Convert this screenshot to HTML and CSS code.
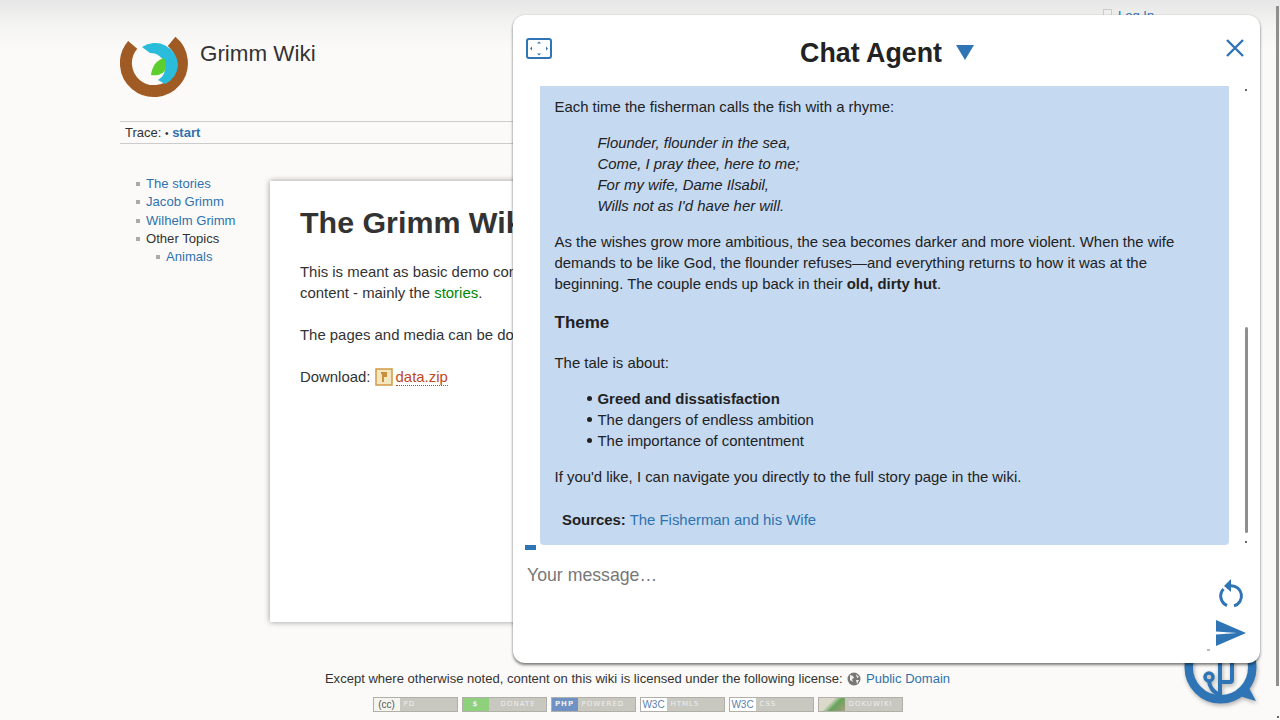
FILE: index.html
```html
<!DOCTYPE html>
<html lang="en">
<head>
<meta charset="utf-8">
<title>Grimm Wiki</title>
<link rel="stylesheet" href="styles.css">
</head>
<body>
<div class="wiki">
  <header class="site-head">
    <svg class="logo" viewBox="0 0 68 62" width="68" height="62" aria-hidden="true">
      <path d="M12.700 8.800A28 28 0 1 0 51.600 5.400" fill="none" stroke="#a05a24" stroke-width="12"/>
      <path d="M22 11A23 23 0 0 1 58 29A23 23 0 0 1 45 48L38 44A14 14 0 0 0 45 29A15 15 0 0 0 30 17Z" fill="#2bbcdc"/>
      <path d="M44 22C36 24 32 31 31 39C38 40 43 38 45 34C47 30 46 26 44 22Z" fill="#5ccf2f"/>
    </svg>
    <div class="site-title">Grimm Wiki</div>
    <div class="login"><span class="login-box"></span><a>Log In</a></div>
  </header>
  <div class="trace">Trace: <span class="dot">•</span> <a>start</a></div>
  <div class="main">
    <nav class="side">
      <ul>
        <li><a>The stories</a></li>
        <li><a>Jacob Grimm</a></li>
        <li><a>Wilhelm Grimm</a></li>
        <li>Other Topics
          <ul><li><a>Animals</a></li></ul>
        </li>
      </ul>
    </nav>
    <article class="card">
      <h1>The Grimm Wiki</h1>
      <p>This is meant as basic demo content<br>content - mainly the <a class="green">stories</a>.</p>
      <p>The pages and media can be down</p>
      <p>Download: <svg class="zip" viewBox="0 0 18 18" width="18" height="18" aria-hidden="true"><rect x="1" y="1" width="16" height="16" fill="#f4e6bf" stroke="#d09a45" stroke-width="1.500"/><path d="M6 4h6v5h-3v5H7V6H6z" fill="#c98f3a"/></svg><a class="file">data.zip</a></p>
    </article>
  </div>
  <footer class="foot">
    <div class="license">Except where otherwise noted, content on this wiki is licensed under the following license: <svg class="globe" viewBox="0 0 14 14" width="14" height="14" aria-hidden="true"><circle cx="7" cy="7" r="6.500" fill="#777"/><path d="M3 3l3 1 1 2-2 1 1 3-3-2zM9 2l3 3-2 1zM9 8l3 0-2 4z" fill="#f0f0f0"/></svg> <a>Public Domain</a></div>
    <div class="badges">
      <span class="badge"><b class="cc">(cc)</b><i>PD</i></span>
      <span class="badge"><b class="don">$</b><i class="wide">DONATE</i></span>
      <span class="badge"><b class="php">PHP</b><i>POWERED</i></span>
      <span class="badge"><b class="w3c">W3C</b><i>HTML5</i></span>
      <span class="badge"><b class="w3c">W3C</b><i>CSS</i></span>
      <span class="badge"><b class="doku"></b><i>DOKUWIKI</i></span>
    </div>
  </footer>
</div>

<div class="page-scroll"><span class="page-thumb"></span><span class="page-arrow"></span></div>

<svg class="brand" viewBox="0 0 76 50" width="76" height="50" aria-hidden="true">
  <circle cx="36.500" cy="7.500" r="31.750" fill="none" stroke="#2f75b5" stroke-width="8.500"/>
  <path d="M64 26L72 41L52 35Z" fill="#2f75b5"/>
  <path d="M36 0V35M36 22H46Q48 22 48 20V0M25 21Q26 31 36 35" fill="none" stroke="#2f75b5" stroke-width="4"/>
  <circle cx="25" cy="17" r="4" fill="none" stroke="#2f75b5" stroke-width="3.500"/>
</svg>

<section class="chat">
  <header class="chat-head">
    <button class="fit" aria-label="Expand">
      <svg viewBox="0 0 26 21" width="26" height="21"><rect x="1" y="1" width="24" height="19" rx="2" fill="none" stroke="#2f75b5" stroke-width="2"/><path d="M13 3.500l2 2h-4zM13 17.500l2-2h-4zM4 10.500l2-2v4zM22 10.500l-2-2v4z" fill="#2f75b5"/></svg>
    </button>
    <h2>Chat Agent</h2>
    <span class="caret"></span>
    <button class="close" aria-label="Close">
      <svg viewBox="0 0 18 18" width="18" height="18"><path d="M1 1L17 17M17 1L1 17" stroke="#2f75b5" stroke-width="2.400" fill="none"/></svg>
    </button>
  </header>
  <div class="chat-body">
    <div class="bubble">
      <p>Each time the fisherman calls the fish with a rhyme:</p>
      <blockquote>Flounder, flounder in the sea,<br>Come, I pray thee, here to me;<br>For my wife, Dame Ilsabil,<br>Wills not as I'd have her will.</blockquote>
      <p>As the wishes grow more ambitious, the sea becomes darker and more violent. When the wife demands to be like God, the flounder refuses—and everything returns to how it was at the beginning. The couple ends up back in their <b>old, dirty hut</b>.</p>
      <h3>Theme</h3>
      <p>The tale is about:</p>
      <ul>
        <li><b>Greed and dissatisfaction</b></li>
        <li>The dangers of endless ambition</li>
        <li>The importance of contentment</li>
      </ul>
      <p>If you'd like, I can navigate you directly to the full story page in the wiki.</p>
      <div class="sources"><b>Sources:</b> <a>The Fisherman and his Wife</a></div>
    </div>
    <div class="scroll"><span class="arrow"></span><span class="thumb"></span><span class="arrow"></span></div>
  </div>
  <div class="tick"></div>
  <div class="chat-input">
    <div class="placeholder">Your message…</div>
    <div class="actions">
      <svg class="redo" viewBox="0 0 26 30" width="26" height="30" aria-hidden="true"><path d="M13 7.700A10.300 10.300 0 0 1 16 27.900M9 27.500A10.300 10.300 0 0 1 5.500 11" fill="none" stroke="#2f75b5" stroke-width="3"/><path d="M13 1V14L6 8Z" fill="#2f75b5"/></svg>
      <svg viewBox="0 0 32 28" width="32" height="28" aria-hidden="true"><path d="M1 1L31 14L1 27V15.500L22 14L1 12.500Z" fill="#2f75b5"/></svg>
    </div>
  </div>
</section>
</body>
</html>
```
FILE: styles.css
```css
* { box-sizing: border-box; }
html, body { margin: 0; height: 720px; overflow: hidden; }
body {
  position: relative;
  width: 1280px;
  background: linear-gradient(#e6e6e6 0, #f4f4f3 25px, #fbfaf8 50px) no-repeat #fbfaf8;
  font: 14.920px/21px "Liberation Sans", Arial, sans-serif;
  color: #333;
}
a { color: #2f72ad; }
.wiki { width: 1280px; height: 720px; display: flex; flex-direction: column; }
.site-head { position: relative; height: 121px; padding: 36px 0 0 120px; display: flex; }
.logo { flex: none; display: block; }
.site-title { margin: 3px 0 0 12px; font-size: 22.400px; line-height: 30px; color: #333; }
.login { position: absolute; left: 1103px; top: 9px; display: flex; gap: 6px; font-size: 13px; line-height: 14px; }
.login-box { width: 9px; height: 11px; border: 1px solid #ccc; background: #eee; }
.trace {
  margin-left: 120px; width: 1040px; height: 23px;
  border-top: 1px solid #ccc; border-bottom: 1px solid #ccc;
  font-size: 13px; line-height: 21px; padding-left: 5px;
}
.trace a { font-weight: bold; }
.trace .dot { font-size: 10px; }
.main { display: flex; height: 500px; padding: 31px 0 0 120px; align-items: flex-start; }
.side { width: 150px; flex: none; font-size: 13.100px; line-height: 18.300px; }
.side ul { margin: 0; padding: 0 0 0 26px; list-style: none; }
.side li { position: relative; }
.side li::before { content: ""; position: absolute; left: -10px; top: 7px; width: 4px; height: 4px; background: #aaa; }
.side li ul { padding-left: 20px; }
.card {
  width: 890px; height: 441px; margin-top: 6px; background: #fff; padding: 23px 30px 0;
  box-shadow: 0 0 6px rgba(0,0,0,.4); overflow: hidden;
}
.card h1 { margin: 0 0 21px; font-size: 30.400px; line-height: 36px; font-weight: bold; color: #333; }
.card p { margin: 0 0 21px; white-space: nowrap; }
.green { color: #080; }
.file { color: #c0481c; border-bottom: 1px dotted #c0481c; }
.zip { vertical-align: -4px; margin-right: 3px; }
.foot { text-align: center; width: 1275px; font-size: 13.050px; padding-top: 24px; }
.license { line-height: 21px; }
.globe { vertical-align: -3px; margin: 0 1px; }
.badges { display: flex; justify-content: center; gap: 4px; margin-top: 8px; }
.badge {
  width: 85px; height: 15px; display: flex; border: 1px solid #b0b0a8; background: #c8c8c0;
  font: 7px/13px "DejaVu Sans", sans-serif; letter-spacing: 1px; color: #eee;
}
.badge b { width: 26px; flex: none; font-weight: bold; text-align: center; overflow: hidden; }
.badge i { font-style: normal; padding-left: 4px; }
.badge .wide { padding-left: 12px; }
.badge .cc { color: #555; background: #f5f5f0; letter-spacing: 0; font: 10px/13px "Liberation Sans", sans-serif; }
.badge .don { background: #8fd07c; }
.badge .php { background: #6f92c4; }
.badge .w3c { background: #fff; color: #5a7fb0; letter-spacing: 0; font: 10px/13px "Liberation Sans", sans-serif; }
.badge .doku { background: linear-gradient(135deg, #dbd9c9 40%, #67a35c 60%, #a99e7e); }

.page-scroll { position: absolute; right: 0; top: 0; width: 5px; height: 720px; }
.page-thumb { position: absolute; left: 1px; top: 6px; width: 3px; height: 680px; background: #8f8f8f; }
.page-arrow { position: absolute; left: 2px; top: 716px; width: 2px; height: 2px; background: #666; }

.brand { position: absolute; left: 1184px; top: 660px; filter: drop-shadow(1px 2px 2px rgba(0,0,0,.3)); }

.chat {
  position: absolute; left: 513px; top: 15px; width: 747px; height: 648px;
  background: #fff; border-radius: 12px; box-shadow: 0 2px 3px rgba(0,0,0,.5), 0 0 2px rgba(0,0,0,.12);
  display: flex; flex-direction: column;
}
.chat-head { position: relative; height: 71px; flex: none; display: flex; justify-content: center; padding-left: 1px; }
.chat-head h2 { margin: 21px 0 0; font-size: 26.800px; line-height: 34px; font-weight: bold; color: #222; }
.caret { width: 0; height: 0; margin: 30px 0 0 14px; border: 9px solid transparent; border-top: 15px solid #2f75b5; border-bottom: 0; }
.chat-head button { position: absolute; padding: 0; border: 0; background: none; line-height: 0; }
.fit { left: 13px; top: 23px; }
.close { right: 16px; top: 24px; }
.chat-body { height: 459px; flex: none; display: flex; padding-left: 27px; }
.bubble { width: 689px; height: 459px; flex: none; background: #c5d9f1; border-radius: 0 0 4px 4px; padding: 10px 14.500px 0; color: #222; }
.bubble p { margin: 0 0 15px; }
.bubble blockquote { margin: 0 0 15px; padding-left: 43px; font-style: italic; }
.bubble h3 { margin: 0 0 17px; padding-top: 2px; font-size: 17px; line-height: 24px; font-weight: bold; }
.bubble ul { margin: 0 0 15px; padding-left: 43px; list-style: none; }
.bubble li { position: relative; }
.bubble li::before { content: ""; position: absolute; left: -11px; top: 8px; width: 5px; height: 5px; border-radius: 50%; background: #222; }
.sources { padding: 7px 0 0 7.500px; }
.scroll { width: 5px; margin: 0 0 0 15px; height: 459px; position: relative; flex: none; }
.arrow { position: absolute; left: 1px; width: 2px; height: 2px; background: #666; top: 3px; }
.arrow:last-child { top: auto; bottom: 2px; }
.thumb { position: absolute; left: 1px; top: 241px; width: 3px; height: 206px; background: #8f8f8f; border-radius: 2px; }
.tick { width: 11px; height: 5px; background: #2f75b5; margin: 0 0 0 12px; }
.chat-input { flex: 1; position: relative; display: flex; padding: 13px 13px 0 14px; }
.chat-input::after { content: ""; position: absolute; left: 694px; top: 99px; width: 3px; height: 2px; background: #bbb; }
.placeholder { flex: 1; font-size: 17.700px; line-height: 24px; color: #777; }
.actions { display: flex; flex-direction: column; align-items: flex-end; gap: 11px; padding-top: 15px; }
.redo { margin-right: 3px; }
```
